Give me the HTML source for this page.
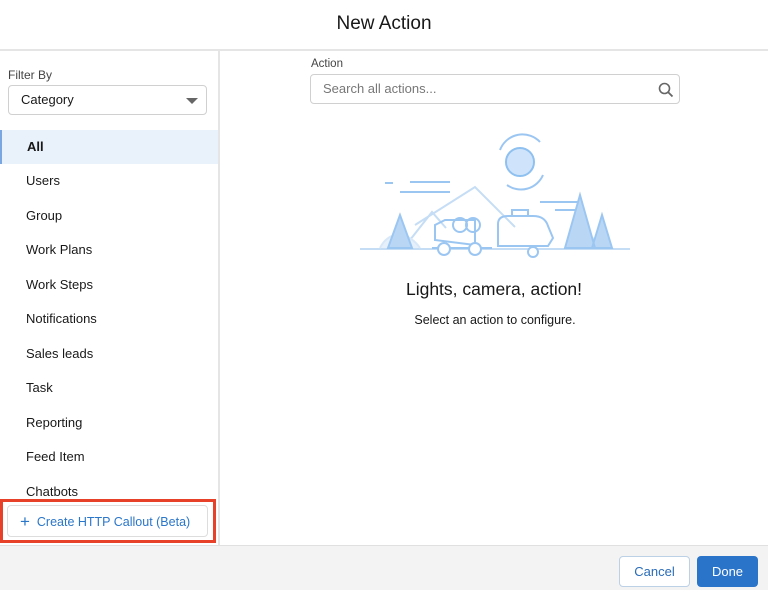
<!DOCTYPE html>
<html><head><style>
*{box-sizing:border-box;margin:0;padding:0}
body{width:768px;height:590px;background:#fff;font-family:"Liberation Sans",sans-serif;color:#181818;position:relative;overflow:hidden}
.hdr{position:absolute;left:0;top:0;width:768px;height:51px;border-bottom:2px solid #e5e5e5;text-align:center;font-size:19px;line-height:48px;color:#181818}
.left{position:absolute;left:0;top:51px;width:220px;height:494px;border-right:2px solid #e5e5e5}
.fl{position:absolute;left:8px;top:17px;font-size:12px;color:#444}
.sel{position:absolute;left:8px;top:34px;width:199px;height:30px;border:1px solid #d0d0d0;border-radius:4px;font-size:13px;line-height:28px;padding-left:12px}
.sel:after{content:"";position:absolute;right:8px;top:12px;border-left:6px solid transparent;border-right:6px solid transparent;border-top:6px solid #666}
.item{position:absolute;left:0;width:218px;height:34px;font-size:13px;line-height:34px;padding-left:26px}
.all{background:#e9f1fb;border-left:2px solid #7aa7e0;font-weight:bold;padding-left:25px}
.red{position:absolute;left:0;top:499px;width:216px;height:44px;border:3px solid #e8412a}
.btn{position:absolute;left:7px;top:505px;width:201px;height:32px;border:1px solid #ddd;border-radius:4px;color:#2a76c9;font-size:12.5px;line-height:30px;padding-left:12px}
.act{position:absolute;left:311px;top:58px;font-size:11.5px;color:#444}
.search{position:absolute;left:310px;top:74px;width:370px;height:30px;border:1px solid #d0d0d0;border-radius:4px;font-size:13px;color:#777;line-height:28px;padding-left:12px}
.ft{position:absolute;left:0;top:545px;width:768px;height:45px;background:#f3f3f3;border-top:1px solid #e0e0e0}
.cancel{position:absolute;left:619px;top:556px;width:71px;height:31px;border:1px solid #bcd0e6;border-radius:4px;background:#fff;color:#2a6cb8;font-size:13px;text-align:center;line-height:29px}
.done{position:absolute;left:697px;top:556px;width:61px;height:31px;border-radius:4px;background:#2a74c9;color:#fff;font-size:13px;text-align:center;line-height:31px}
</style></head><body>
<div class="hdr">New Action</div>
<div class="left">
<div class="fl">Filter By</div>
<div class="sel">Category</div>
<div class="item all" style="top:79px">All</div>
<div class="item" style="top:113px">Users</div>
<div class="item" style="top:148px">Group</div>
<div class="item" style="top:182px">Work Plans</div>
<div class="item" style="top:217px">Work Steps</div>
<div class="item" style="top:251px">Notifications</div>
<div class="item" style="top:286px">Sales leads</div>
<div class="item" style="top:320px">Task</div>
<div class="item" style="top:355px">Reporting</div>
<div class="item" style="top:389px">Feed Item</div>
<div class="item" style="top:424px">Chatbots</div>
</div>
<div class="red"></div>
<div class="btn"><span style="font-size:17px;position:relative;top:1px">+</span>&nbsp; Create HTTP Callout (Beta)</div>
<div class="act">Action</div>
<div class="search">Search all actions...
<svg style="position:absolute;right:5px;top:7px" width="16" height="16" viewBox="0 0 16 16"><circle cx="6.5" cy="6.5" r="5" fill="none" stroke="#666" stroke-width="1.6"/><line x1="10.2" y1="10.2" x2="14.5" y2="14.5" stroke="#666" stroke-width="1.8"/></svg></div>
<svg style="position:absolute;left:340px;top:130px" width="310" height="140" viewBox="0 0 310 140" fill="none" stroke="#9cc6f2" stroke-width="2">
<circle cx="180" cy="32" r="14" fill="#cfe4fa" stroke="#8ec0f0"/>
<path d="M160 20a24 24 0 0 1 40-8M203 45a24 24 0 0 1-36 10"/>
<path d="M75 95l60-38 40 40M70 110l22-28 14 16" stroke="#c5ddf5"/>
<path d="M70 52h40M45 53h8M60 62h50M200 72h40M215 80h30"/>
<path d="M20 119h270" stroke="#c5ddf5"/>
<path d="M40 118c10-20 30-15 40 0M225 118c10-15 30-15 40 0" fill="#e5f0fb" stroke="#d8e8f8"/>
<path d="M60 85l-12 33h24z M240 65l-15 53h30z M262 85l-10 33h20z" fill="#b9d7f5"/>
<path d="M95 110v-15l10-5h30v25zM92 118h60"/>
<circle cx="104" cy="119" r="6" fill="#fff"/><circle cx="135" cy="119" r="6" fill="#fff"/>
<circle cx="120" cy="95" r="7"/><circle cx="133" cy="95" r="7"/>
<path d="M158 116v-22q0-8 10-8h25q12 0 15 10l5 12l-5 8z"/><rect x="172" y="80" width="16" height="6"/>
<circle cx="193" cy="122" r="5" fill="#fff"/>
</svg>
<div style="position:absolute;left:0;width:988px;top:279px;text-align:center;font-size:17.5px">Lights, camera, action!</div>
<div style="position:absolute;left:0;width:990px;top:313px;text-align:center;font-size:12.5px">Select an action to configure.</div>
<div class="ft"></div>
<div class="cancel">Cancel</div>
<div class="done">Done</div>
</body></html>
